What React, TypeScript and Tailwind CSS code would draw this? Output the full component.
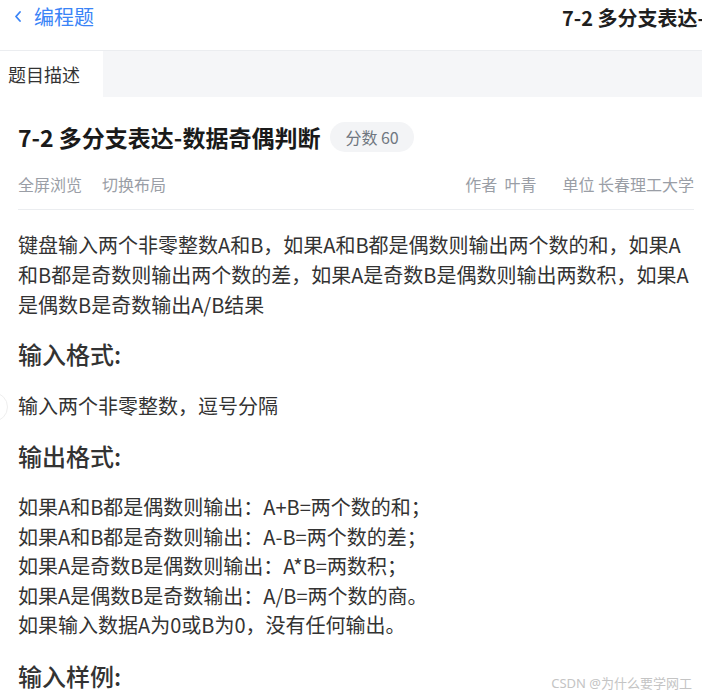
import React from "react";

const font = { fontFamily: '"Noto Sans", "Noto Sans CJK SC", sans-serif' };

export default function App() {
  const lines = [
    "如果A和B都是偶数则输出：A+B=两个数的和；",
    "如果A和B都是奇数则输出：A-B=两个数的差；",
    "如果A是奇数B是偶数则输出：A*B=两数积；",
    "如果A是偶数B是奇数输出：A/B=两个数的商。",
    "如果输入数据A为0或B为0，没有任何输出。",
  ];
  return (
    <div
      className="relative w-[702px] h-[696px] overflow-hidden bg-white text-[#333]"
      style={{ fontFamily: '"Noto Sans CJK SC", "Noto Sans", sans-serif' }}
    >
      {/* header */}
      <div className="flex h-[51px] items-start border-b border-[#ebedf0] overflow-hidden">
        <div className="flex w-[562px] shrink-0 items-center pl-[14px] pt-[3px] h-[30px] text-[#3a84f7]">
          <svg width="8" height="11" viewBox="0 0 8 11" className="mr-[12px]">
            <polyline points="6,1 2,5.5 6,10" fill="none" stroke="#3a84f7" strokeWidth="1.8" strokeLinecap="round" strokeLinejoin="round" />
          </svg>
          <span className="text-[20px] leading-[30px]">编程题</span>
        </div>
        <div className="min-w-0 flex-1 overflow-hidden whitespace-nowrap pt-[3px] text-[20px] leading-[30px] font-semibold text-[#1f1f1f]">
          7-2 多分支表达-数据奇偶判断
        </div>
      </div>

      {/* tabs */}
      <div className="flex h-[46px] bg-[#f5f6f8]">
        <div className="flex w-[103px] items-center bg-white pl-[8px] text-[18px] text-[#333]">题目描述</div>
      </div>

      {/* content */}
      <div className="pl-[18px] pr-[8px]">
        <div className="mt-[25px] flex items-center gap-[10px]">
          <h1 className="text-[23px] font-bold leading-[30px] text-[#1a1a1a]">7-2 多分支表达-数据奇偶判断</h1>
          <span className="flex h-[30px] items-center rounded-full bg-[#f3f4f6] px-[15px] text-[16px] text-[#707780]">分数 60</span>
        </div>

        <div className="mt-[20px] flex items-center justify-between border-b border-[#ebedf0] pb-[13px] text-[16px] leading-[24px] text-[#9a9ea6]">
          <div className="flex gap-[20px]">
            <span>全屏浏览</span>
            <span>切换布局</span>
          </div>
          <div className="flex gap-[26px]">
            <span>作者&nbsp;&nbsp;叶青</span>
            <span>单位 长春理工大学</span>
          </div>
        </div>

        <p className="mt-[20px] text-[20px] leading-[30px] text-[#333]">
          键盘输入两个非零整数A和B，如果A和B都是偶数则输出两个数的和，如果A和B都是奇数则输出两个数的差，如果A是奇数B是偶数则输出两数积，如果A是偶数B是奇数输出A/B结果
        </p>

        <h2 className="mt-[16px] mb-[19px] text-[24px] font-medium leading-[36px] text-[#333]">输入格式:</h2>
        <p className="text-[20px] leading-[30px]">输入两个非零整数，逗号分隔</p>

        <h2 className="mt-[17px] mb-[18px] text-[24px] font-medium leading-[36px] text-[#333]">输出格式:</h2>
        <div className="text-[20px] leading-[29.5px]">
          {lines.map((l) => (
            <div key={l}>{l}</div>
          ))}
        </div>

        <h2 className="mt-[18px] text-[24px] font-medium leading-[36px] text-[#333]">输入样例:</h2>
      </div>

      {/* faint floating button edge */}
      <div className="absolute left-[-22px] top-[392px] h-[30px] w-[30px] rounded-full border border-[#eeeeee] bg-white"></div>

      {/* watermark */}
      <div className="absolute right-[10px] top-[674px] text-[13px] leading-[18px] text-[#c4c4c4]" style={font}>
        CSDN @为什么要学网工
      </div>
    </div>
  );
}
